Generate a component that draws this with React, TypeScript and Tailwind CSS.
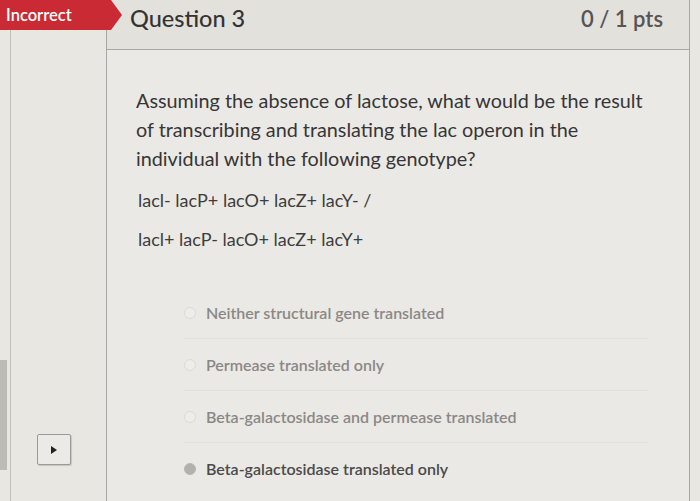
import React from 'react';

const answers = [
  { text: 'Neither structural gene translated', selected: false },
  { text: 'Permease translated only', selected: false },
  { text: 'Beta-galactosidase and permease translated', selected: false },
  { text: 'Beta-galactosidase translated only', selected: true },
];

export default function App() {
  return (
    <div
      className="relative w-[700px] h-[501px] overflow-hidden bg-[#e9e7e2] flex"
      style={{ fontFamily: 'Lato, "Open Sans", sans-serif' }}
    >
      {/* left rail */}
      <div className="w-[106px] shrink-0 flex">
        <div className="w-[10px] flex flex-col pt-[360px]">
          <div className="h-[110px] w-[7px] bg-[#bdbbb6]" />
        </div>
        <div className="flex-1 border-l border-[#c2c0bb] flex flex-col pt-[434px] pl-[26px]">
          <div className="w-[34px] h-[31px] border border-[#9c9a96] rounded-[2px] bg-[#eceae6] flex items-center justify-center shadow-[1px_1px_1px_rgba(0,0,0,0.15)]">
            <div className="w-0 h-0 border-y-[4px] border-y-transparent border-l-[6px] border-l-[#222]" />
          </div>
        </div>
      </div>

      {/* question box */}
      <div className="flex-1 mr-[10px] border-l border-r border-[#a9a7a2] flex flex-col">
        <div className="h-[50px] bg-[#e3e1dc] border-b border-[#a9a7a2] flex items-center justify-between pl-[23px] pr-[26px] pb-[12px]">
          <span className="text-[23.5px] text-[#333] font-medium">Question 3</span>
          <span className="text-[22px] text-[#555] font-semibold">0 / 1 pts</span>
        </div>
        <div className="flex-1 bg-[#ebe9e5] pl-[29px] pr-[40px] pt-[36px]">
          <p className="text-[19.8px] leading-[29px] text-[#363636] w-[510px]">
            Assuming the absence of lactose, what would be the result of transcribing and translating the lac operon in the individual with the following genotype?
          </p>
          <p className="mt-[14px] pl-[2px] text-[18px] text-[#3d3d3d]">lacl- lacP+ lacO+ lacZ+ lacY- /</p>
          <p className="mt-[12px] pl-[2px] text-[18px] text-[#3d3d3d]">lacl+ lacP- lacO+ lacZ+ lacY+</p>
          <div className="mt-[34px] ml-[48px] flex flex-col">
            {answers.map((a, i) => (
              <div
                key={a.text}
                className={`h-[52px] flex items-center gap-[10px] ${i < answers.length - 1 ? 'border-b border-[#e2e0db]' : ''}`}
              >
                <span
                  className={`w-[12px] h-[12px] rounded-full border ${a.selected ? 'border-[#b9b7b2] bg-[#b3b1ac]' : 'border-[#dcdad5] bg-[#efede9]'}`}
                />
                <span className={`text-[16px] font-semibold ${a.selected ? 'text-[#4a4a4a]' : 'text-[#8a8885]'}`}>
                  {a.text}
                </span>
              </div>
            ))}
          </div>
        </div>
      </div>

      {/* incorrect banner */}
      <div className="absolute left-0 top-0 h-[30px] w-[122px] bg-[#c92a33] [clip-path:polygon(0_0,111px_0,122px_15px,111px_30px,0_30px)] flex items-center pl-[6px]">
        <span className="text-white text-[16.5px] font-semibold">Incorrect</span>
      </div>
    </div>
  );
}
